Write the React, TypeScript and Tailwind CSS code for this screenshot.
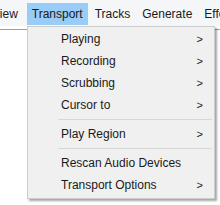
import { Fragment } from 'react'

type Item = { label: string; sub?: boolean; sep?: boolean }

const items: Item[] = [
  { label: 'Playing', sub: true },
  { label: 'Recording', sub: true },
  { label: 'Scrubbing', sub: true },
  { label: 'Cursor to', sub: true },
  { label: 'Play Region', sub: true, sep: true },
  { label: 'Rescan Audio Devices', sep: true },
  { label: 'Transport Options', sub: true },
]

const menus = ['Transport', 'Tracks', 'Generate', 'Effect']

export default function App() {
  return (
    <div
      className="relative w-[220px] h-[205px] overflow-hidden bg-white text-[12px] text-[#1a1a1a]"
      style={{ fontFamily: '"Liberation Sans", Arial, sans-serif' }}
    >
      {/* menu bar */}
      <div className="flex h-[26px] items-stretch bg-[#f5f6f7] pt-[3px] pb-[1px] whitespace-nowrap">
        <div className="ml-[-8px] flex items-center pr-[9px]">View</div>
        {menus.map((m) => (
          <div
            key={m}
            className={
              (m === 'Transport' ? 'bg-[#99ccf7] ' : '') +
              'flex items-center px-[5px] mr-[2px]'
            }
          >
            {m}
          </div>
        ))}
      </div>
      <div className="mt-[3px] h-px bg-[#a0a0a0]" />

      {/* dropdown */}
      <div className="absolute left-[27px] top-[26px] w-[188px] border border-[#cccccc] bg-[#f0f0f0] pt-px pb-[2px] shadow-[2px_2px_2px_rgba(0,0,0,0.35)]">
        {items.map((it) => (
          <Fragment key={it.label}>
            {it.sep && (
              <div className="flex h-[7px] items-center pl-[30px] pr-[2px]">
                <div className="h-px w-full bg-[#d7d7d7]" />
              </div>
            )}
            <div className="flex h-[22px] items-center pl-[33px] pr-[11px]">
              <span className="flex-1">{it.label}</span>
              {it.sub && <span className="text-[11px]">&gt;</span>}
            </div>
          </Fragment>
        ))}
      </div>
    </div>
  )
}
